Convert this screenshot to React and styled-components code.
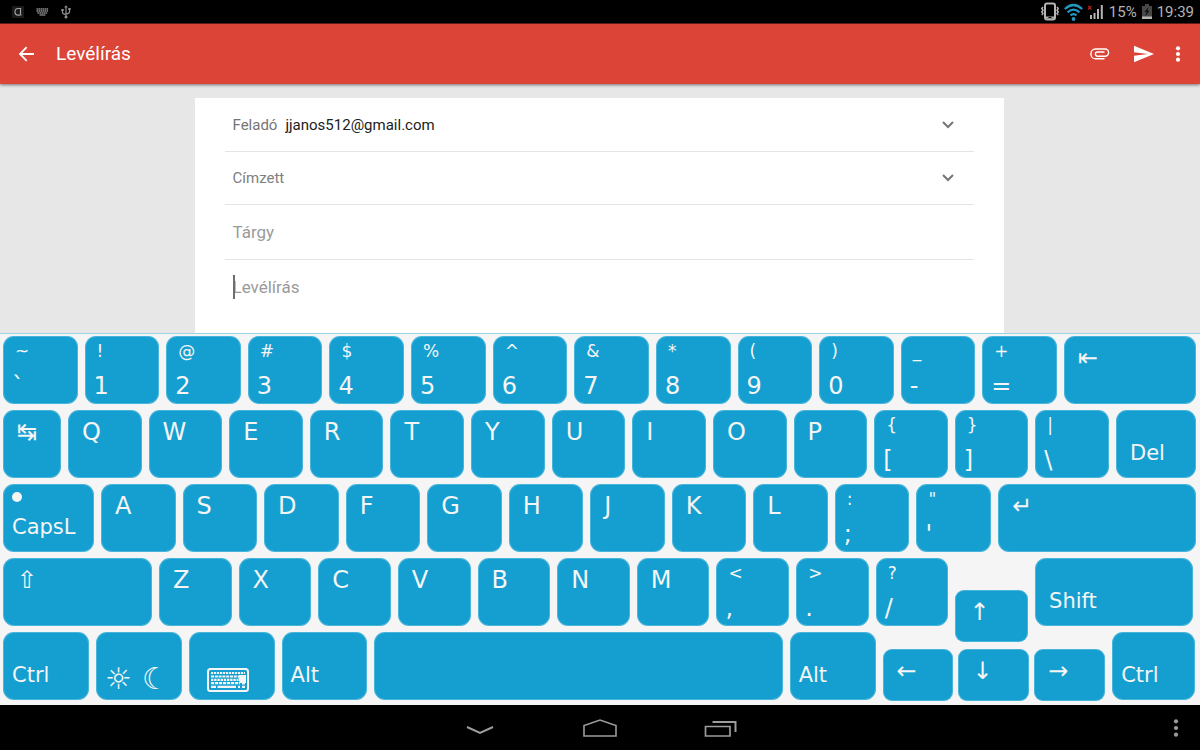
import React from 'react';
import styled, { createGlobalStyle } from 'styled-components';

const GlobalStyle = createGlobalStyle`
	* {
		box-sizing: border-box;
	}

	body {
		margin: 0;
		background: #000;
		font-family: Roboto, sans-serif;
	}

	button,
	input,
	select,
	textarea {
		margin: 0;
		padding: 0;
		border: 0;
		background: none;
		color: inherit;
		font: inherit;
		outline: none;
	}

	svg {
		display: block;
	}
`;

const Page = styled.div`
	min-height: 100vh;
	display: flex;
	flex-direction: column;
	background: #e7e7e7;
`;

const StatusBar = styled.div`
	height: 24px;
	padding: 0 6px 0 12px;
	display: flex;
	justify-content: space-between;
	background: #000;
	border-bottom: 1px solid #6b211b;
	color: #b4b4b4;
	font-size: 15px;
	line-height: 24px;
`;

const StatusGroup = styled.div`
	display: flex;
	align-items: center;
	gap: ${(props) => props.$gap}px;
`;

const AppBar = styled.header`
	height: 60px;
	padding: 0 19px 0 16px;
	display: flex;
	align-items: center;
	gap: 20px;
	background: #db4437;
	box-shadow: 0 1px 3px rgba(0, 0, 0, 0.5);
	color: #fff;
	z-index: 1;

	h1 {
		flex: 1;
		margin: 0;
		font-size: 19px;
		font-weight: 400;
		line-height: 26px;
	}
`;

const Actions = styled.div`
	display: flex;
	align-items: center;
	gap: 21px;
`;

const IconButton = styled.button`
	display: flex;
	align-items: center;
	justify-content: center;
	cursor: pointer;
`;

const Compose = styled.main`
	flex: 1;
	display: flex;
	justify-content: center;
	padding: 14px 18px 0 16px;
`;

const Sheet = styled.form`
	width: 100%;
	max-width: 809px;
	padding: 0 30px;
	background: #fff;
`;

const Field = styled.div`
	height: ${(props) => props.$height}px;
	padding: 0 20px 0 8px;
	display: flex;
	align-items: center;
	gap: 8px;
	border-bottom: 1px solid ${(props) => (props.$last ? 'transparent' : '#e4e4e4')};
	color: #757575;
	font-size: ${(props) => (props.$large ? 17 : 15)}px;
	line-height: 24px;

	input,
	select,
	textarea {
		flex: 1;
		min-width: 0;
	}

	select {
		appearance: none;
		color: #212121;
	}

	textarea {
		height: 24px;
		resize: none;
	}

	::placeholder {
		color: ${(props) => (props.$large ? '#9a9a9a' : '#808080')};
		opacity: 1;
	}
`;

const Editor = styled.div`
	flex: 1;
	display: flex;
	position: relative;
`;

const Caret = styled.span`
	position: absolute;
	left: 0;
	top: 0;
	width: 2px;
	height: 24px;
	background: #6e6e6e;
`;

const Keyboard = styled.section`
	padding: 2px 4px 5px 3px;
	display: flex;
	flex-direction: column;
	gap: 6px;
	background: #f5f5f5;
	border-top: 1px solid #9bd3e6;
	font-family: 'DejaVu Sans', sans-serif;
`;

const KeyRow = styled.div`
	height: 68px;
	padding-right: ${(props) => props.$inset || 0}px;
	display: grid;
	grid-template-columns: ${(props) => props.$columns};
	align-items: start;
	gap: 7px;
`;

const ArrowGroup = styled.div`
	display: grid;
	grid-template-columns: repeat(3, 1fr);
	gap: 5px;
	padding-top: 17px;
`;

const KeyCap = styled.button`
	min-width: 0;
	height: ${(props) => (props.$short ? 52 : 68)}px;
	margin-top: ${(props) => (props.$lowered ? 32 : 0)}px;
	padding-left: ${(props) => props.$left}px;
	padding-top: ${(props) => props.$top}px;
	display: flex;
	flex-direction: column;
	align-items: flex-start;
	gap: ${(props) => props.$gap || 5}px;
	background: #149fd0;
	border-radius: ${(props) => (props.$short ? 9 : 11)}px;
	box-shadow: inset 0 0 0 1px rgba(255, 255, 255, 0.22);
	color: #f5f5f5;
	line-height: 30px;
	cursor: pointer;
`;

const Main = styled.span`
	font-size: 24px;
`;

const Symbol = styled.span`
	padding-left: 3px;
	font-size: 17px;
`;

const Label = styled.span`
	font-size: 21px;
`;

const Picto = styled.span`
	display: flex;
	gap: 10px;
	font-size: 30px;
	line-height: 38px;
`;

const Led = styled.span`
	width: 10px;
	height: 10px;
	border-radius: 50%;
	background: #f5f5f5;
`;

const NavBar = styled.nav`
	height: 45px;
	padding: 0 21px;
	display: grid;
	grid-template-columns: 1fr auto 1fr;
	align-items: center;
	background: #000;
	color: #9c9c9c;
`;

const NavButtons = styled.div`
	grid-column: 2;
	display: flex;
	gap: 86px;
`;

const NavEnd = styled.div`
	display: flex;
	justify-content: flex-end;
`;

const Dots = ({ size, color }) => (
	<svg width="6" height={size} viewBox={`0 0 6 ${size}`} fill={color}>
		<circle cx="3" cy="2.3" r="2.1" />
		<circle cx="3" cy={size / 2} r="2.1" />
		<circle cx="3" cy={size - 2.3} r="2.1" />
	</svg>
);

const Chevron = () => (
	<svg width="12" height="8" viewBox="0 0 12 8" fill="none" stroke="#757575" strokeWidth="2">
		<path d="M1 1l5 5 5-5" />
	</svg>
);

const KeyboardIcon = () => (
	<svg width="42" height="24" viewBox="0 0 42 24" fill="none" stroke="#f5f5f5">
		<rect x="1" y="1" width="40" height="22" rx="2.5" strokeWidth="2" />
		<path d="M4 5h34" strokeWidth="2.2" strokeDasharray="2.2 .8" />
		<path d="M4 8.500h29" strokeWidth="2.200" strokeDasharray="3 .8" />
		<path d="M4 11.800h27" strokeWidth="2.200" strokeDasharray="2.400 .8" />
		<path d="M4 15.200h29" strokeWidth="2.200" strokeDasharray="3.200 .8" />
		<path d="M4 18.800h5M10.500 18.800h18.500M31 18.800h2M35 18.800h3" strokeWidth="2.200" />
		<path d="M32 8h6v6h-5M35 15.500h3" strokeWidth="2" />
		<path d="M32 9h5v4h-5z" fill="#f5f5f5" />
	</svg>
);

const numberKeys = ['~`', '!1', '@2', '#3', '$4', '%5', '^6', '&7', '*8', '(9', ')0', '_-', '+='];

// a two character string is a shifted symbol above its main character
const Keys = ({ chars }) =>
	chars.map((pair) =>
		pair.length === 2 ? (
			<KeyCap key={pair} type="button" $left={9} $top={0}>
				<Symbol>{pair[0]}</Symbol>
				<Main>{pair[1]}</Main>
			</KeyCap>
		) : (
			<GlyphKey key={pair}>{pair}</GlyphKey>
		)
	);

const GlyphKey = ({ short, lowered, name, children }) => (
	<KeyCap type="button" aria-label={name} $short={short} $lowered={lowered} $left={14} $top={7}>
		<Main>{children}</Main>
	</KeyCap>
);

const LabelKey = ({ left = 9, children }) => (
	<KeyCap type="button" $left={left} $top={28}>
		<Label>{children}</Label>
	</KeyCap>
);

const StatusIcons = () => (
	<StatusGroup $gap={12}>
		<svg width="12" height="12" viewBox="0 0 12 12" fill="none" stroke="#a0a0a0" strokeWidth="1.2">
			<rect width="12" height="12" fill="#1a1a1a" stroke="none" />
			<path d="M9.200 2.500H6Q3 2.500 3 5.800T6 9.200h2.200M8.500 2.500v5.500q0 1.200 1 1.200" />
		</svg>
		<svg width="13" height="8" viewBox="0 0 13 8" fill="none" stroke="#8a8a8a">
			<path d="M.5 1h12M.5 3h12M1.500 5h10" strokeWidth="1.300" strokeDasharray="1.600 .4" />
			<path d="M3.500 7h6" strokeWidth="1.300" />
		</svg>
		<svg width="10" height="14" viewBox="0 0 10 14" fill="none" stroke="#8f8f8f" strokeWidth="1.2">
			<path d="M5 2v10M1.5 5v2.5Q1.5 9 5 9.5M8.5 4v3Q8.5 8.5 5 9" />
			<path d="M3.2 2.5L5 .2l1.8 2.3z" fill="#8f8f8f" stroke="none" />
			<path d="M.3 4h2.4v2H.3zM7.3 3h2.4v2H7.3z" fill="#8f8f8f" stroke="none" />
			<circle cx="5" cy="12" r="1.5" fill="#8f8f8f" stroke="none" />
		</svg>
	</StatusGroup>
);

const SystemIcons = () => (
	<StatusGroup $gap={5}>
		<svg width="18" height="19" viewBox="1 0 18 19" fill="none" stroke="#b4b4b4">
			<rect x="5" y="1.5" width="10" height="16" rx="2" strokeWidth="2" />
			<path d="M5 15.5h10" strokeWidth="2" />
			<path d="M8.5 15.5h3" stroke="#000" />
			<path
				d="M3 5L1.8 6.500 3 8.200 1.800 10 3 11.500 1.800 13M17 5l1.200 1.500L17 8.200l1.200 1.800-1.200 1.500 1.200 1.500"
				strokeWidth="1.5"
			/>
		</svg>
		<svg width="19" height="18" viewBox="0 0 19 18" fill="none" stroke="#2497c2" strokeWidth="2.2">
			<path d="M.8 6Q9.500-2 18.200 6M3.600 9.300q5.900-5.200 11.800 0M6.500 12.300q3-2.500 6 0" />
			<circle cx="9.500" cy="16" r="1.900" fill="#2497c2" stroke="none" />
		</svg>
		<svg width="16" height="14" viewBox="0 0 16 14" fill="#b4b4b4">
			<path d="M2 10h2v4H2zM5.500 8h2v6h-2zM9 4h2v10H9zM12.800 0h2v14h-2z" />
			<path d="M0 1l3.500 3.500M3.500 1L0 4.500" stroke="#a8211c" strokeWidth="1.300" />
		</svg>
		<span>15%</span>
		<svg width="10" height="15" viewBox="0 0 10 15">
			<path d="M3 0h4v2h3v13H0V2h3z" fill="#484848" />
			<path d="M0 12.500h10V15H0z" fill="#b4b4b4" />
			<path d="M6.500 3L2.500 8h2l-1 4 4-5.200h-2z" fill="#101010" />
		</svg>
		<span>19:39</span>
	</StatusGroup>
);

export default function App() {
	return (
		<Page>
			<GlobalStyle />
			<StatusBar>
				<StatusIcons />
				<SystemIcons />
			</StatusBar>
			<AppBar>
				<IconButton type="button" aria-label="Vissza">
					<svg width="20" height="16" viewBox="0 0 20 16" fill="none" stroke="#fff" strokeWidth="1.8">
						<path d="M18 8H4M10.700 1.200L4 8l6.700 6.800" />
					</svg>
				</IconButton>
				<h1>Levélírás</h1>
				<Actions>
					<IconButton type="button" aria-label="Csatolás">
						<svg width="24" height="12" viewBox="0 0 24 12" fill="none" stroke="#fff" strokeWidth="1.4">
							<path d="M15.500 10.800H6.500a4.600 4.900 0 0 1 0-9.800h9.500a3.600 3.600 0 0 1 0 7.200H8.500a2.100 2.100 0 0 1 0-4.200h7" />
						</svg>
					</IconButton>
					<IconButton type="button" aria-label="Küldés">
						<svg width="20" height="18" viewBox="0 0 20 18" fill="#fff">
							<path d="M0 17.300L20 9 0 .7v6.500L14 9 0 10.800z" />
						</svg>
					</IconButton>
					<IconButton type="button" aria-label="További lehetőségek">
						<Dots size={16} color="#fff" />
					</IconButton>
				</Actions>
			</AppBar>
			<Compose>
				<Sheet>
					<Field $height={54}>
						<label htmlFor="from">Feladó</label>
						<select id="from">
							<option>jjanos512@gmail.com</option>
						</select>
						<Chevron />
					</Field>
					<Field $height={53}>
						<input aria-label="Címzett" placeholder="Címzett" />
						<IconButton type="button" aria-label="Másolat">
							<Chevron />
						</IconButton>
					</Field>
					<Field $height={55} $large>
						<input aria-label="Tárgy" placeholder="Tárgy" />
					</Field>
					<Field $height={55} $large $last>
						<Editor>
							<textarea aria-label="Levélírás" placeholder="Levélírás" />
							<Caret />
						</Editor>
					</Field>
				</Sheet>
			</Compose>
			<Keyboard>
				<KeyRow $columns="repeat(13, 746fr) 1320fr">
					<Keys chars={numberKeys} />
					<GlyphKey name="Backspace">⇤</GlyphKey>
				</KeyRow>
				<KeyRow $columns="580fr repeat(13, 736fr) 800fr">
					<GlyphKey name="Tab">↹</GlyphKey>
					<Keys chars={[...'QWERTYUIOP', '{[', '}]', '|\\']} />
					<LabelKey left={14}>Del</LabelKey>
				</KeyRow>
				<KeyRow $columns="910fr repeat(11, 745fr) 1980fr">
					<KeyCap type="button" $left={9} $top={8} $gap={10}>
						<Led />
						<Label>CapsL</Label>
					</KeyCap>
					<Keys chars={[...'ASDFGHJKL', ':;', '"\'']} />
					<GlyphKey name="Enter">↵</GlyphKey>
				</KeyRow>
				<KeyRow $columns="1490fr repeat(11, 727fr) 1580fr" $inset={3}>
					<GlyphKey name="Shift">⇧</GlyphKey>
					<Keys chars={[...'ZXCVBNM', '<,', '>.', '?/']} />
					<GlyphKey short lowered name="Fel">
						↑
					</GlyphKey>
					<LabelKey left={14}>Shift</LabelKey>
				</KeyRow>
				<KeyRow $columns="repeat(4, 86fr) 409fr 86fr 223fr 83fr" $inset={1}>
					<LabelKey>Ctrl</LabelKey>
					<KeyCap type="button" $left={9} $top={28}>
						<Picto>
							<span>☼</span>
							<span>☾</span>
						</Picto>
					</KeyCap>
					<KeyCap type="button" aria-label="Billentyűzet" $left={18} $top={36}>
						<KeyboardIcon />
					</KeyCap>
					<LabelKey>Alt</LabelKey>
					<KeyCap type="button" aria-label="Szóköz" $left={9} $top={0} />
					<LabelKey>Alt</LabelKey>
					<ArrowGroup>
						<GlyphKey short name="Balra">
							←
						</GlyphKey>
						<GlyphKey short name="Le">
							↓
						</GlyphKey>
						<GlyphKey short name="Jobbra">
							→
						</GlyphKey>
					</ArrowGroup>
					<LabelKey>Ctrl</LabelKey>
				</KeyRow>
			</Keyboard>
			<NavBar>
				<NavButtons>
					<IconButton type="button" aria-label="Billentyűzet elrejtése">
						<svg width="34" height="24" viewBox="0 0 34 24" fill="none" stroke="#9c9c9c" strokeWidth="2">
							<path d="M4 11l13 6 13-6" />
						</svg>
					</IconButton>
					<IconButton type="button" aria-label="Kezdőképernyő">
						<svg width="34" height="24" viewBox="0 0 34 24" fill="none" stroke="#9c9c9c" strokeWidth="1.6">
							<path d="M1 20V9.500L17 4l16 5.500V20z" />
						</svg>
					</IconButton>
					<IconButton type="button" aria-label="Legutóbbi alkalmazások">
						<svg width="34" height="24" viewBox="0 0 34 24" fill="none" stroke="#9c9c9c">
							<path d="M2.500 10.500H27V20H2.500z" strokeWidth="1.700" />
							<path d="M9.500 6H32.500V16" strokeWidth="2" />
						</svg>
					</IconButton>
				</NavButtons>
				<NavEnd>
					<IconButton type="button" aria-label="Menü">
						<Dots size={18} color="#9c9c9c" />
					</IconButton>
				</NavEnd>
			</NavBar>
		</Page>
	);
}
